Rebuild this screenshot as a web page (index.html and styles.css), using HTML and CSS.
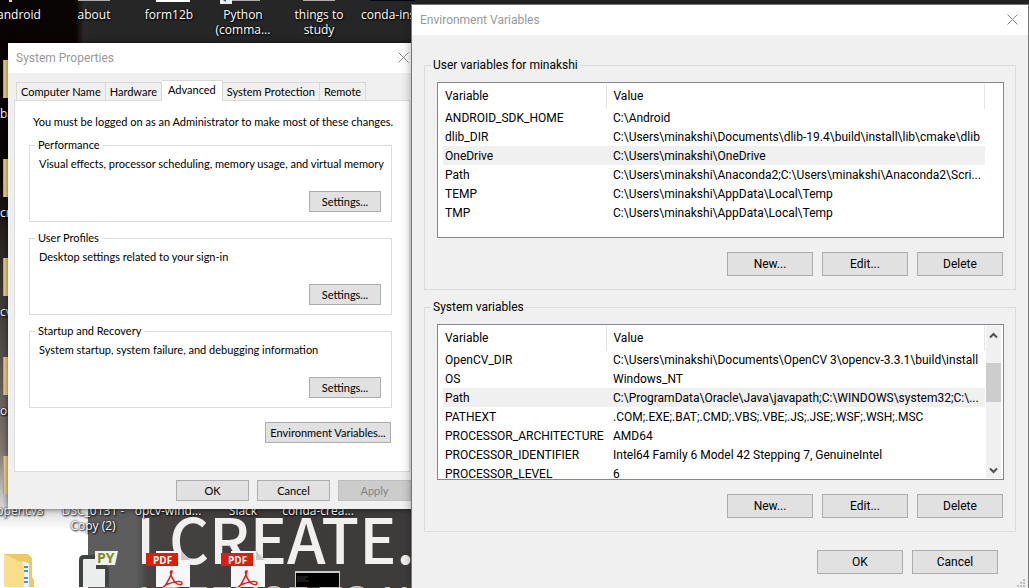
FILE: index.html
```
<!DOCTYPE html>
<html lang="en">
<head>
  <meta charset="UTF-8">
  <meta name="viewport" content="width=device-width, initial-scale=1">
  <title>Environment Variables</title>
  <link rel="stylesheet" href="styles.css">
</head>
<body>
  <div class="desktop">

    <!-- Wallpaper -->
    <div class="wallpaper" aria-hidden="true">
      <div class="paper"></div>
      <div class="board"></div>
      <p class="slogan">I</p>
      <p class="slogan slogan-main">CREATE.</p>
      <p class="slogan slogan-sub">I REFUSE TO NE</p>
    </div>

    <!-- Desktop icons -->
    <svg class="strip" width="420" height="6" viewBox="0 0 420 6">
      <path d="M9 0h3v2h-3z" fill="#f5d56b"/>
      <path d="M78 0h32v1h-32zM220 0h40v1h-40zM303 0h32v1h-32z" fill="#a9adad"/>
      <path d="M156 0h34v2h-34z" fill="#fff"/>
      <path d="M220 0h12v4h-12z" fill="#eee"/>
      <path d="M223 0l3 2v-2z" fill="#1f5c9e"/>
      <path d="M370 0h45v1h-45z" fill="#000814"/>
    </svg>
    <span class="label" style="left:-19px;top:7px">android</span>
    <span class="label" style="left:56px;top:7px">about</span>
    <span class="label" style="left:131px;top:7px">form12b</span>
    <span class="label" style="left:205px;top:7px">Python<br>(comma...</span>
    <span class="label" style="left:281px;top:7px">things to<br>study</span>
    <span class="label" style="left:357px;top:7px">conda-inst...</span>

    <span class="folder" style="top:60px"></span>
    <span class="folder" style="top:159px"></span>
    <span class="folder" style="top:258px"></span>
    <span class="folder" style="top:357px"></span>
    <span class="folder" style="top:456px"></span>
    <span class="label label-cut" style="top:106px">ba</span>
    <span class="label label-cut" style="top:205px">cr</span>
    <span class="label label-cut" style="top:304px">cv</span>
    <span class="label label-cut" style="top:403px">oc</span>
    <span class="label" style="left:-18px;top:503px">opencv3</span>
    <span class="label" style="left:55px;top:503px">DSC_0131 -<br>Copy (2)</span>
    <span class="label" style="left:130px;top:503px">opcv-wind...</span>
    <span class="label" style="left:205px;top:503px">Slack</span>
    <span class="label" style="left:280px;top:503px">conda-crea...</span>

    <svg class="file" style="left:2px" width="34" height="36" viewBox="0 0 34 36">
      <path d="M2 3h24l4 4v19l2 3v7H2z" fill="#edc95f"/>
      <path d="M20 10l7 2v24h-7z" fill="#eef4f7"/>
      <path d="M22 16h4M22 20h4M22 27h4M22 31h4" stroke="#4698bd" stroke-width="2"/>
      <path d="M2 3l17 8q3 2 3 6v19H2z" fill="#f9df8a"/>
    </svg>
    <div class="file" style="left:78px">
      <svg width="42" height="36" viewBox="0 0 42 36">
        <path d="M3 38V9q0-3 3-3h12v10h11v22z" fill="#eceeee"/>
        <path d="M3 38V9q0-3 3-3h14M29 38V16" fill="none" stroke="#3f4344" stroke-width="4"/>
        <path d="M17 0h23l-3 14H17z" fill="#f0f0f0"/>
        <path d="M18 16h11" stroke="#3f4344" stroke-width="4"/>
      </svg>
      <span class="py">PY</span>
    </div>
    <div class="file" style="left:146px">
      <svg width="46" height="36" viewBox="0 0 46 36">
        <path d="M10 0h25l9 9v27H10z" fill="#f7f7f7"/>
        <path d="M35 0v9h9z" fill="#c9c9c9"/>
        <path d="M0 2h32v13H0z" fill="#e21c0c"/>
        <path d="M26 20c-3-1-1 6 2 10s8 5 8 2-9-1-14 1-6 5-4 3 8-13 8-16z" fill="none" stroke="#e21c1c" stroke-width="1.500"/>
      </svg>
      <span class="pdf">PDF</span>
    </div>
    <div class="file" style="left:221px">
      <svg width="46" height="36" viewBox="0 0 46 36">
        <path d="M10 0h25l9 9v27H10z" fill="#f7f7f7"/>
        <path d="M35 0v9h9z" fill="#c9c9c9"/>
        <path d="M0 2h32v13H0z" fill="#e21c0c"/>
        <path d="M26 20c-3-1-1 6 2 10s8 5 8 2-9-1-14 1-6 5-4 3 8-13 8-16z" fill="none" stroke="#e21c1c" stroke-width="1.500"/>
      </svg>
      <span class="pdf">PDF</span>
    </div>
    <svg class="file" style="left:295px" width="46" height="36" viewBox="0 0 46 36">
      <path d="M0 20h45v16H0z" fill="#c9c9c9"/>
      <path d="M1 22h43v14H1z" fill="#000"/>
      <path d="M2 26h11M2 28h9M2 30h12" stroke="#333"/>
    </svg>

    <!-- System Properties -->
    <section class="window props">
      <header class="titlebar">
        <h1>System Properties</h1>
        <button class="close" type="button" aria-label="Close System Properties">
          <svg width="11" height="11" viewBox="0 0 11 11"><path d="M.5.5l10 10M10.500.5l-10 10" stroke="#8c8c8c" fill="none"/></svg>
        </button>
      </header>
      <nav class="tabs">
        <button type="button">Computer Name</button>
        <button type="button">Hardware</button>
        <button class="active" type="button">Advanced</button>
        <button type="button">System Protection</button>
        <button type="button">Remote</button>
      </nav>
      <div class="panel">
        <p class="notice">You must be logged on as an Administrator to make most of these changes.</p>
        <fieldset class="group">
          <legend>Performance</legend>
          <p>Visual effects, processor scheduling, memory usage, and virtual memory</p>
          <button class="btn" type="button">Settings...</button>
        </fieldset>
        <fieldset class="group">
          <legend>User Profiles</legend>
          <p>Desktop settings related to your sign-in</p>
          <button class="btn" type="button">Settings...</button>
        </fieldset>
        <fieldset class="group">
          <legend>Startup and Recovery</legend>
          <p>System startup, system failure, and debugging information</p>
          <button class="btn" type="button">Settings...</button>
        </fieldset>
        <button class="btn btn-env" type="button">Environment Variables...</button>
      </div>
      <footer class="actions">
        <button class="btn" type="button">OK</button>
        <button class="btn" type="button">Cancel</button>
        <button class="btn" type="button" disabled>Apply</button>
      </footer>
    </section>

    <!-- Environment Variables -->
    <section class="window env">
      <header class="titlebar">
        <h1>Environment Variables</h1>
        <button class="close" type="button" aria-label="Close Environment Variables">
          <svg width="11" height="11" viewBox="0 0 11 11"><path d="M.5.5l10 10M10.500.5l-10 10" stroke="#8c8c8c" fill="none"/></svg>
        </button>
      </header>
      <div class="env-body">
        <fieldset class="vars">
          <legend>User variables for minakshi</legend>
          <div class="list">
            <table>
              <thead>
                <tr><th class="name">Variable</th><th>Value</th></tr>
              </thead>
              <tbody>
                <tr><td>ANDROID_SDK_HOME</td><td>C:\Android</td></tr>
                <tr><td>dlib_DIR</td><td>C:\Users\minakshi\Documents\dlib-19.4\build\install\lib\cmake\dlib</td></tr>
                <tr class="selected"><td>OneDrive</td><td>C:\Users\minakshi\OneDrive</td></tr>
                <tr><td>Path</td><td>C:\Users\minakshi\Anaconda2;C:\Users\minakshi\Anaconda2\Scri...</td></tr>
                <tr><td>TEMP</td><td>C:\Users\minakshi\AppData\Local\Temp</td></tr>
                <tr><td>TMP</td><td>C:\Users\minakshi\AppData\Local\Temp</td></tr>
              </tbody>
            </table>
          </div>
          <div class="buttons">
            <button class="btn" type="button">New...</button>
            <button class="btn" type="button">Edit...</button>
            <button class="btn" type="button">Delete</button>
          </div>
        </fieldset>
        <fieldset class="vars">
          <legend>System variables</legend>
          <div class="list">
            <table>
              <thead>
                <tr><th class="name">Variable</th><th>Value</th></tr>
              </thead>
              <tbody>
                <tr><td>OpenCV_DIR</td><td>C:\Users\minakshi\Documents\OpenCV 3\opencv-3.3.1\build\install</td></tr>
                <tr><td>OS</td><td>Windows_NT</td></tr>
                <tr class="selected"><td>Path</td><td>C:\ProgramData\Oracle\Java\javapath;C:\WINDOWS\system32;C:\...</td></tr>
                <tr><td>PATHEXT</td><td>.COM;.EXE;.BAT;.CMD;.VBS;.VBE;.JS;.JSE;.WSF;.WSH;.MSC</td></tr>
                <tr><td>PROCESSOR_ARCHITECTURE</td><td>AMD64</td></tr>
                <tr><td>PROCESSOR_IDENTIFIER</td><td>Intel64 Family 6 Model 42 Stepping 7, GenuineIntel</td></tr>
                <tr><td>PROCESSOR_LEVEL</td><td>6</td></tr>
              </tbody>
            </table>
            <div class="scrollbar">
              <svg width="9" height="7" viewBox="0 0 9 7"><path d="M1 5.500l3.500-3.500L8 5.500" fill="none" stroke="#505050" stroke-width="2"/></svg>
              <span class="thumb"></span>
              <svg width="9" height="7" viewBox="0 0 9 7"><path d="M1 1.500l3.500 3.500L8 1.500" fill="none" stroke="#505050" stroke-width="2"/></svg>
            </div>
          </div>
          <div class="buttons">
            <button class="btn" type="button">New...</button>
            <button class="btn" type="button">Edit...</button>
            <button class="btn" type="button">Delete</button>
          </div>
        </fieldset>
        <footer class="buttons">
          <button class="btn" type="button">OK</button>
          <button class="btn" type="button">Cancel</button>
        </footer>
      </div>
      <svg class="grip" width="8" height="8" viewBox="0 0 8 8"><path d="M6 0h2v2H6zM3 3h2v2H3zM6 3h2v2H6zM0 6h2v2H0zM3 6h2v2H3zM6 6h2v2H6z" fill="#bfbfbf"/></svg>
    </section>
  </div>
</body>
</html>
```
FILE: styles.css
```
* {
  box-sizing: border-box;
}
body {
  margin: 0;
  font-family: "Open Sans", "Noto Sans", sans-serif;
  font-size: 12px;
  line-height: 16px;
  color: #000;
}
h1, p, fieldset, legend {
  margin: 0;
  padding: 0;
}
fieldset {
  min-width: 0;
}
button {
  font: inherit;
  color: inherit;
  padding: 0;
}

/* desktop */
.desktop {
  position: relative;
  height: 100vh;
  overflow: hidden;
  background: linear-gradient(90deg, #090303 0, #0a0505 76px, #2b2828 84px, #262626 92px);
}
.wallpaper {
  position: absolute;
  inset: 0;
}
.paper {
  position: absolute;
  top: 180px;
  bottom: 0;
  left: 0;
  width: 88px;
  background: linear-gradient(#0d0808, #2a2320 60px, #4a4542 150px, #81756e 270px, #ddd 330px, #fff 350px);
}
.board {
  position: absolute;
  top: 500px;
  bottom: 0;
  left: 88px;
  right: 0;
  background: linear-gradient(90deg, #5d5d5d 0, #5d5d5d 48px, #474343 60px, #3d3a3a 200px, #454343);
}
.slogan {
  position: absolute;
  left: 136px;
  top: 506px;
  font-family: "Noto Sans CJK JP", sans-serif;
  font-size: 62px;
  font-weight: 500;
  line-height: 62px;
  color: #f2f0ef;
  white-space: nowrap;
}
.slogan-main {
  left: 169px;
}
.slogan-sub {
  left: 138px;
  top: 579px;
  font-size: 40px;
  line-height: 40px;
  color: #c4c1c0;
}

.strip {
  position: absolute;
  left: 0;
  top: 0;
}
.label {
  position: absolute;
  width: 76px;
  text-align: center;
  line-height: 15px;
  white-space: nowrap;
  color: #fff;
  text-shadow: 1px 1px 2px #000, 0 0 2px #000;
}
.label-cut {
  left: 0;
  width: 20px;
  text-align: left;
}
.folder {
  position: absolute;
  left: 3px;
  width: 20px;
  height: 38px;
  background: #ecd284;
  border-left: 1px solid #c8a956;
}
.file {
  position: absolute;
  top: 551px;
}
.py, .pdf {
  position: absolute;
  font-weight: bold;
}
.py {
  left: 19px;
  top: -1px;
  font-size: 14px;
  color: #7b8d24;
}
.pdf {
  left: 7px;
  top: 1px;
  font-size: 10px;
  color: #fff;
}

/* windows */
.window {
  position: absolute;
  font-family: Roboto, "Open Sans", sans-serif;
  background: #f0f0f0;
}
.titlebar {
  display: flex;
  align-items: center;
  justify-content: space-between;
  height: 30px;
  padding: 0 10px 0 8px;
  background: #fff;
}
.titlebar h1 {
  font-size: 12px;
  font-weight: normal;
  color: #999;
}
.close {
  display: flex;
  padding-bottom: 2px;
  border: 0;
  background: none;
}
.btn {
  background: #e1e1e1;
  border: 1px solid #adadad;
}
.btn:hover {
  background: #e5f1fb;
  border-color: #0078d7;
}
.btn:disabled {
  background: #ccc;
  border-color: #bfbfbf;
  color: #838383;
}

/* system properties */
.props {
  left: 8px;
  top: 43px;
  width: 411px;
  padding-bottom: 8px;
  box-shadow: 0 0 6px rgba(0, 0, 0, 0.6);
}
.tabs, .panel, .actions {
  font-family: Lato, "Liberation Sans", sans-serif;
  font-size: 11px;
}
.tabs {
  display: flex;
  align-items: flex-end;
  height: 27px;
  padding-left: 8px;
}
.tabs button {
  height: 18px;
  padding: 0 4px;
  border: 1px solid #d9d9d9;
  border-width: 1px 1px 0 0;
  background: #f0f0f0;
}
.tabs button:first-child {
  border-left-width: 1px;
}
.tabs .active {
  height: 21px;
  margin: 0 0 -1px;
  padding: 0 6px 3px;
  background: #fff;
  z-index: 1;
}
.panel {
  display: flex;
  flex-direction: column;
  margin: 0 9px 0 6px;
  padding: 13px 17px 28px 14px;
  background: #fff;
  border: 1px solid #dcdcdc;
}
.notice {
  padding-left: 4px;
  margin-bottom: 7px;
  white-space: nowrap;
}
.group {
  height: 85px;
  margin-bottom: 8px;
  border: 1px solid #dcdcdc;
  padding: 3px 10px 0 9px;
}
.group legend {
  margin-left: -4px;
  padding: 0 3px;
}
.group p {
  white-space: nowrap;
}
.group .btn {
  display: block;
  width: 72px;
  height: 21px;
  margin: 19px 0 0 auto;
}
.btn-env {
  align-self: flex-end;
  width: 126px;
  height: 21px;
  margin: 6px 1px 0 0;
}
.actions {
  display: flex;
  justify-content: flex-end;
  gap: 8px;
  padding: 8px 8px 0;
}
.actions .btn {
  width: 73px;
  height: 21px;
}

/* environment variables */
.env {
  left: 412px;
  top: 5px;
  right: 1px;
  min-height: 583px;
  box-shadow: 0 0 0 1px #777, 0 0 10px rgba(0, 0, 0, 0.4);
}
.env-body {
  padding: 22px 12px 0;
}
.vars {
  border: 1px solid #dcdcdc;
  padding: 9px 11px 13px 12px;
  margin-bottom: 9px;
}
.vars legend {
  margin-left: -6px;
  padding: 0 2px;
}
.list {
  display: flex;
  align-items: flex-start;
  height: 156px;
  border: 1px solid #828790;
  background: #fff;
  padding: 1px 1px 1px 5px;
  overflow: hidden;
}
table {
  flex: none;
  width: 542px;
  border-collapse: collapse;
  table-layout: fixed;
  white-space: nowrap;
}
thead tr {
  height: 24px;
}
tbody {
  border-top: 1px solid #fff;
}
th {
  font-weight: normal;
  text-align: left;
  padding: 1px 2px 0;
  border-right: 1px solid #e5e5e5;
}
td {
  height: 19px;
  padding: 0 2px;
}
th + th, td + td {
  padding-left: 7px;
}
th.name {
  width: 163px;
}
.selected {
  background: #f0f0f0;
}
.scrollbar {
  display: flex;
  flex-direction: column;
  align-items: center;
  justify-content: space-between;
  align-self: stretch;
  width: 15px;
  padding: 6px 0 4px;
  margin-left: 1px;
  background: #f0f0f0;
}
.thumb {
  width: 15px;
  height: 39px;
  margin-bottom: 42px;
  background: #cdcdcd;
}
.buttons {
  display: flex;
  justify-content: flex-end;
  gap: 9px;
  padding: 14px 1px 0 0;
}
.buttons .btn {
  width: 86px;
  height: 24px;
}
footer.buttons {
  padding: 9px 18px 0 0;
}
.grip {
  position: absolute;
  right: 3px;
  bottom: 1px;
}
```
